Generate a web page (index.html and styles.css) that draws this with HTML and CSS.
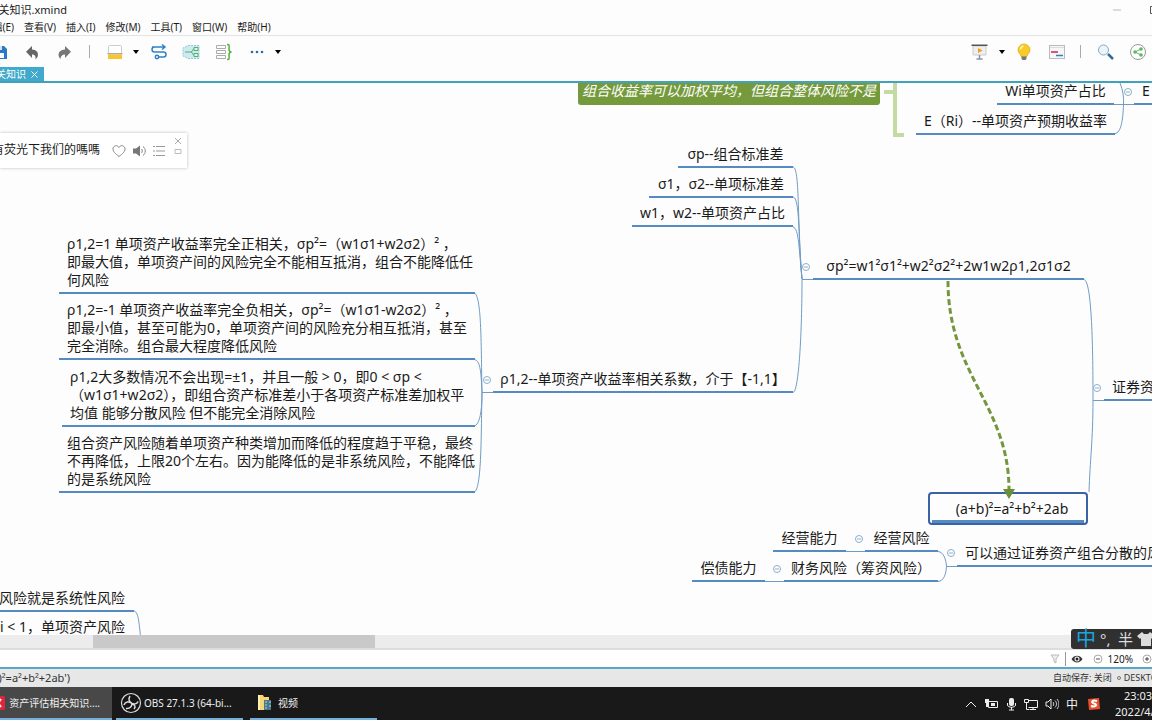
FILE: index.html
```html
<!DOCTYPE html>
<html lang="zh-CN">

<head>
  <meta charset="UTF-8">
  <meta name="viewport" content="width=device-width, initial-scale=1.0">
  <title>资产评估相关知识.xmind</title>
  <link rel="stylesheet" href="styles.css">
</head>

<body>
  <div class="window">
    <header class="title-bar">
      <span class="file-name">资产评估相关知识.xmind</span>
      <div class="window-buttons">
        <button aria-label="最小化"><svg width="10" height="10"><path d="M1 5h8" stroke="#bbb" /></svg></button>
        <button aria-label="最大化"><svg width="10" height="10"><path d="M.5 1.500h8v7h-8z" fill="none" stroke="#555" /></svg></button>
      </div>
    </header>

    <nav class="menu-bar">
      <div class="menu-first"><button>编辑(E)</button></div>
      <button>查看(V)</button>
      <button>插入(I)</button>
      <button>修改(M)</button>
      <button>工具(T)</button>
      <button>窗口(W)</button>
      <button>帮助(H)</button>
    </nav>

    <div class="toolbar">
      <div class="tools tools-left">
        <button aria-label="保存"><svg viewBox="0 0 20 20"><path d="M4 4h10l3 3v10H4z" fill="#2b78c5" /><path d="M6 11h8v5H6z" fill="#fff" /><path d="M7 4h5v4H7z" fill="#cfe3f5" /></svg></button>
        <button aria-label="撤销"><svg viewBox="0 0 20 20"><path d="M10 4v3.500c5 .2 7 3.500 5.500 7.500l-2 2.500c.4-3.500-.5-5-3.500-5V16L4 9.800z" fill="#666" /></svg></button>
        <button aria-label="重做"><svg viewBox="0 0 20 20"><path d="M11 4v3.500c-5 .2-7.500 3.500-6 7.500l1.500 2c.3-3 1.500-4.500 4.500-4.500V16l6-6.200z" fill="#777" /></svg></button>
        <span class="divider"></span>
        <button aria-label="样式"><svg viewBox="0 0 20 20"><rect x="3.500" y="3.500" width="13" height="8" rx="1" fill="#fff" stroke="#ccc" /><path d="M2.500 11h15v1.500h-15z" fill="#aaa" /><path d="M3 12.500h14V17H3z" fill="#f7c52d" /></svg></button>
        <button class="caret" aria-label="更多样式"><svg viewBox="0 0 6 4"><path d="M0 0h6L3 4z" /></svg></button>
        <button aria-label="联系"><svg viewBox="0 0 20 20" fill="none" stroke="#2f82c8" stroke-width="1.500"><path d="M3 5h13M13 2.500L16 5l-3 2.500M7 5H5.500a2.500 2.500 0 0 0 0 5h9a2.500 2.500 0 0 1 0 5H10" /><circle cx="8" cy="15" r="1.700" /></svg></button>
        <button aria-label="外框"><svg viewBox="0 0 20 20"><path d="M7 3.500h11v13H7L2 14V6z" fill="#cdeaf0" stroke="#9ac7d5" stroke-dasharray="2 1" /><path d="M4 10h6M10 10c2 0 1-3 3-3M10 10c2 0 1 3 3 3" fill="none" stroke="#4caf6d" /><path d="M13 5.500h4v3h-4zM13 11.500h4v3h-4z" fill="#dff5e8" stroke="#52ad7b" /></svg></button>
        <button aria-label="概要"><svg viewBox="0 0 20 20" fill="none"><path d="M3.500 3.500h9v3h-9zM3.500 8.500h9v3h-9zM3.500 13.500h9v3h-9z" stroke="#aaa" /><path d="M14 2.500c3 0 2 1.500 2 4.500 0 2 .5 3 2.500 3-2 0-2.500 1-2.500 3 0 3 1 4.500-2 4.500" stroke="#54ae3b" stroke-width="1.500" /></svg></button>
        <button aria-label="更多"><svg viewBox="0 0 20 20" fill="#2b6cb0"><circle cx="7" cy="10" r="1.300" /><circle cx="12" cy="10" r="1.300" /><circle cx="17" cy="10" r="1.300" /></svg></button>
        <button class="caret caret-last" aria-label="展开"><svg viewBox="0 0 6 4"><path d="M0 0h6L3 4z" /></svg></button>
      </div>
      <div class="tools">
        <button aria-label="演示"><svg viewBox="0 0 20 20"><path d="M4 4h13v9H4z" fill="#eee" stroke="#ccc" /><path d="M2.500 2.500h16V4h-16z" fill="#555" /><path d="M9 6l4.500 2.500L9 11z" fill="#f0a020" /><path d="M10.500 13v4M7.500 17h6" stroke="#8892a8" stroke-width="1.500" /></svg></button>
        <button class="caret caret-last" aria-label="演示选项"><svg viewBox="0 0 6 4"><path d="M0 0h6L3 4z" /></svg></button>
        <button aria-label="头脑风暴"><svg viewBox="0 0 20 20"><path d="M11 2a6 6 0 0 1 6 6c0 3-3 4-3 6.500H8C8 12 5 11 5 8a6 6 0 0 1 6-6z" fill="#f9cb28" stroke="#e0a91c" stroke-width=".8" /><path d="M8.500 14.500h5v2l-1 1.500h-3l-1-1.500z" fill="#777" /><path d="M7.500 7.500c0-2 1-3 3-3.500" stroke="#fff1b0" fill="none" stroke-width="1.500" /></svg></button>
        <button aria-label="甘特图"><svg viewBox="0 0 20 20"><rect x="4.500" y="3.500" width="15" height="13" fill="#f6f6f6" stroke="#bbb" /><path d="M5 5.500h14" stroke="#ddd" /><path d="M6 10h7" stroke="#d0214c" stroke-width="1.500" /><path d="M11 13.500h7" stroke="#2f7ec6" stroke-width="1.500" /></svg></button>
        <span class="divider"></span>
        <button aria-label="搜索"><svg viewBox="0 0 20 20"><circle cx="7.500" cy="8" r="5" fill="#eaf6fc" stroke="#86a8bd" /><path d="M12 12l5 5" stroke="#326d99" stroke-width="2.500" /></svg></button>
        <button aria-label="分享"><svg viewBox="0 0 20 20"><circle cx="10" cy="10" r="7.500" fill="#fff" stroke="#999" /><path d="M13 7l-6 3 6 3" fill="none" stroke="#5cb860" /><circle cx="13" cy="7" r="1.800" fill="#5cb860" /><circle cx="7" cy="10" r="1.800" fill="#5cb860" /><circle cx="13" cy="13" r="1.800" fill="#5cb860" /></svg></button>
      </div>
    </div>

    <div class="tab-bar">
      <div class="tab">
        <span>资产评估相关知识</span>
        <button aria-label="关闭标签"><svg width="7" height="7"><path d="M.5.500l6 6M6.500.500l-6 6" stroke="#fff" /></svg></button>
      </div>
    </div>

    <main class="canvas">
      <!-- connectors, fold toggles -->
      <svg class="lines" width="1152" height="552" viewBox="0 83 1152 552">
        <g class="branch">
          <path d="M793 167C800 168 797 220 802 279" />
          <path d="M793 197C800 198 798 235 802 279" />
          <path d="M793 227C799 228 799 250 802 279" />
          <path d="M813 279.500H802C802 330 799 392 793 392.500" />
          <path d="M474 293C482 294 481 350 482 392.500" />
          <path d="M474 359.500C481 360 481 375 482 392.500" />
          <path d="M474 426C480 425 482 410 482 392.500" />
          <path d="M474 492C482 491 481 430 482 392.500H494" />
          <path d="M1084 279.500C1092 281 1093 350 1093 400C1093 440 1090 460 1089 492" />
          <path d="M1093 400.500H1104" />
          <path d="M1120 83C1123 90 1124 98 1123.500 104.500C1123 120 1121 133 1115 133.500" />
          <path d="M1114 104.500H1134" />
          <path d="M846 551.500H865M764 581.500H784" />
          <path d="M938 551.500C944 552 946 560 946.500 566.500C946 574 944 581 938 581.500M946.500 566.500H957" />
          <path d="M134 611C139 612 139 625 141 640" />
        </g>
        <path class="bracket" d="M884 92h9M895 83v52h9" />
        <path class="relation" d="M948 281C948 375 1009 405 1009 490" />
        <g class="toggle">
          <circle cx="806" cy="267" r="3.500" /><path d="M804 267h4" />
          <circle cx="487" cy="380" r="3.500" /><path d="M485 380h4" />
          <circle cx="1097" cy="388" r="3.500" /><path d="M1095 388h4" />
          <circle cx="1128" cy="92" r="3.500" /><path d="M1126 92h4" />
          <circle cx="859" cy="539" r="3.500" /><path d="M857 539h4" />
          <circle cx="777" cy="569" r="3.500" /><path d="M775 569h4" />
          <circle cx="951" cy="553" r="3.500" /><path d="M949 553h4" />
        </g>
      </svg>

      <div class="callout">组合收益率可以加权平均，但组合整体风险不是</div>
      <div class="node n-wi">Wi单项资产占比</div>
      <div class="node n-e">E（R）</div>
      <div class="node n-eri">E（Ri）--单项资产预期收益率</div>

      <div class="node n-sigma-p">σp--组合标准差</div>
      <div class="node n-sigma">σ1，σ2--单项标准差</div>
      <div class="node n-w">w1，w2--单项资产占比</div>
      <div class="node n-formula">σp²=w1²σ1²+w2²σ2²+2w1w2ρ1,2σ1σ2</div>
      <div class="node n-rho">ρ1,2--单项资产收益率相关系数，介于【-1,1】</div>

      <div class="node note n-note1">ρ1,2=1 单项资产收益率完全正相关，σp²=（w1σ1+w2σ2）² ，<br>即最大值，单项资产间的风险完全不能相互抵消，组合不能降低任<br>何风险</div>
      <div class="node note n-note2">ρ1,2=-1 单项资产收益率完全负相关，σp²=（w1σ1-w2σ2）² ，<br>即最小值，甚至可能为0，单项资产间的风险充分相互抵消，甚至<br>完全消除。组合最大程度降低风险</div>
      <div class="node note n-note3">ρ1,2大多数情况不会出现=±1，并且一般 &gt; 0，即0 &lt; σp &lt;<br>（w1σ1+w2σ2），即组合资产标准差小于各项资产标准差加权平<br>均值 能够分散风险 但不能完全消除风险</div>
      <div class="node note n-note4">组合资产风险随着单项资产种类增加而降低的程度趋于平稳，最终<br>不再降低，上限20个左右。因为能降低的是非系统风险，不能降低<br>的是系统风险</div>

      <div class="node n-portfolio">证券资产组合的风险</div>
      <div class="selection"><div class="node">(a+b)²=a²+b²+2ab</div></div>
      <div class="node n-op-power">经营能力</div>
      <div class="node n-op-risk">经营风险</div>
      <div class="node n-debt">偿债能力</div>
      <div class="node n-fin">财务风险（筹资风险）</div>
      <div class="node n-spread">可以通过证券资产组合分散的风险</div>
      <div class="node n-market">市场组合风险就是系统性风险</div>
      <div class="node n-beta">Bi &lt; 1，单项资产风险</div>

      <svg class="arrow" width="12" height="10"><path d="M0 0h12L6 10z" fill="#6a8f35" /></svg>

      <div class="lyrics">
        <span class="lyrics-text">只有荧光下我们的嗎嗎</span>
        <button aria-label="喜欢"><svg width="14" height="14" viewBox="0 0 14 14"><path d="M7 12.500C3 9.500 1 7.500 1 5c0-3.500 4.500-4.500 6-1.500C8.500.5 13 1.500 13 5c0 2.500-2 4.500-6 7.500z" fill="none" stroke="#888" /></svg></button>
        <button aria-label="音量"><svg width="14" height="14" viewBox="0 0 14 14"><path d="M1 4.500h3l4-3v11l-4-3H1z" fill="#777" /><path d="M9.500 5c1 1 1 3 0 4M11 2.500c3 2 3 7 0 9" fill="none" stroke="#888" /></svg></button>
        <button aria-label="列表"><svg width="14" height="14" viewBox="0 0 14 14"><path d="M1 2.500h2M1 7h2M1 11.500h2M4 2.500h9M4 7h9M4 11.500h9" stroke="#999" /></svg></button>
        <div class="lyrics-side">
          <button aria-label="关闭"><svg width="8" height="8"><path d="M1 1l6 6M7 1L1 7" stroke="#aaa" /></svg></button>
          <button aria-label="窗口"><svg width="8" height="8"><path d="M1 1.500h6v4H1z" fill="none" stroke="#bbb" /></svg></button>
        </div>
      </div>
    </main>

    <div class="scrollbar"><div class="scroll-thumb"></div></div>

    <div class="zoom-bar">
      <button aria-label="筛选"><svg width="10" height="10"><path d="M1 1h8L6 5v4L4 8V5z" fill="#eee" stroke="#bbb" /></svg></button>
      <span class="zoom-divider"></span>
      <button aria-label="预览"><svg width="12" height="10"><path d="M.5 5C3 .5 9 .5 11.500 5 9 9.500 3 9.500.5 5z" fill="#333" /><circle cx="6" cy="5" r="2.500" fill="#fff" /><circle cx="6" cy="5" r="1.500" fill="#222" /></svg></button>
      <button class="zoom-out" aria-label="缩小"><svg width="10" height="10"><circle cx="5" cy="5" r="4" fill="#fff" stroke="#aaa" /><path d="M3 5h4" stroke="#555" /></svg></button>
      <span class="zoom-value">120%</span>
      <button aria-label="放大"><svg width="10" height="10"><circle cx="5" cy="5" r="4" fill="#fff" stroke="#aaa" /><path d="M3 5h4M5 3v4" stroke="#444" /></svg></button>
    </div>

    <footer class="status-bar">
      <span class="status-text">主题 ('(a+b)²=a²+b²+2ab')</span>
      <span class="status-right"><span>自动保存: 关闭</span><i></i><span class="host">DESKTOP</span></span>
    </footer>

    <div class="taskbar">
      <button class="task task-xmind"><svg width="14" height="14"><rect width="14" height="14" rx="2" fill="#e0263c" /><path d="M4 3l6 8M10 3L7 7l-4 3" stroke="#fff" stroke-width="2" /></svg><span>资产评估相关知识....</span></button>
      <button class="task task-open"><svg width="22" height="22" viewBox="0 0 22 22"><circle cx="11" cy="11" r="9.500" fill="#151515" stroke="#ddd" stroke-width="1.200" /><path d="M10 4c-2 3-1 6 2 7.500 3 1 5.500 0 6-2M12 11.500c0 3-2 5.500-6 5M12 11.500C9 9 5 9.500 4 13M14 17c2-2 1-4-2-5.500" fill="none" stroke="#ddd" stroke-width="1.500" /></svg><span>OBS 27.1.3 (64-bi...</span></button>
      <button class="task task-open task-folder"><svg width="14" height="17"><path d="M0 1h5l1 2h5v13H0z" fill="#f6d675" /><path d="M0 1h2v15H0z" fill="#fff0b8" /><path d="M6 6h7v10H6z" fill="#49788d" /><path d="M7 8h2M7 11h2M7 14h2M11 8h2M11 12h2" stroke="#b7d4cf" /></svg><span>视频</span></button>
      <div class="tray">
        <svg width="12" height="14"><path d="M1 10l5-5 5 5" fill="none" stroke="#eee" /></svg>
        <svg width="14" height="14"><path d="M4.500 4.500h9v6h-9z" fill="none" stroke="#eee" /><path d="M7 6h4v3H7zM1 2h4v4H4v4H2V6H1z" fill="#eee" /></svg>
        <svg width="12" height="14"><rect x="4" y="1" width="5" height="8" rx="2" fill="#eee" /><path d="M2.500 6v2c0 3 8 3 8 0V6M6.500 10v3M4 13h5" fill="none" stroke="#eee" /></svg>
        <svg width="14" height="14"><path d="M4.500 3.500h9v7h-9M9 10.500v2M6 12.500h6M.5 2.500h4v3h-4zM2.500 5.500v7h3" fill="none" stroke="#eee" /></svg>
        <svg width="14" height="14"><path d="M1 5h2l3-3v10L3 9H1z" fill="none" stroke="#eee" /><path d="M8 5c1 1 1 3 0 4M10 3.500c2 2 2 5 0 7M12 2c2.500 3 2.500 7 0 10" fill="none" stroke="#ccc" /></svg>
        <span class="tray-ime">中</span>
        <svg class="sogou" width="14" height="14"><path d="M1 2l11-1 1 11-11 1z" fill="#e8512f" /><path d="M10 4C5 2.500 3.500 5.500 7 6.500c4 1 2 4-3 2.500" fill="none" stroke="#fff" stroke-width="2" /></svg>
        <div class="clock"><span>23:03</span><span>2022/4/6</span></div>
      </div>
    </div>

    <div class="ime-bar">
      <span class="ime-lang">中</span>
      <span class="ime-punct">°,</span>
      <span>半</span>
      <svg width="18" height="16"><path d="M5 1l2 2h4l2-2 5 4-3 3-1-1v8H4V7L3 8 0 5z" fill="#ddd" /></svg>
    </div>
  </div>
</body>

</html>
```
FILE: styles.css
```css
* {
  box-sizing: border-box;
}

body {
  margin: 0;
  font-family: "Noto Sans", "Noto Sans CJK SC", sans-serif;
  color: #1a1a1a;
}

button {
  padding: 0;
  border: none;
  background: none;
  font: inherit;
  color: inherit;
  white-space: nowrap;
}

svg {
  display: block;
  flex: none;
}

.window {
  position: relative;
  display: flex;
  flex-direction: column;
  height: 100vh;
  overflow: hidden;
  background: #fdfdfd;
  white-space: nowrap;
}

/* title and menu */
.title-bar {
  display: flex;
  justify-content: space-between;
  height: 19px;
  font-size: 11px;
  line-height: 19px;
  overflow: hidden;
}

.file-name {
  display: flex;
  justify-content: flex-end;
  width: 67px;
}

.window-buttons {
  display: flex;
  gap: 28px;
  align-items: center;
  margin-right: -8px;
}

.menu-bar {
  display: flex;
  gap: 10px;
  height: 17px;
  font-size: 10px;
  line-height: 17px;
  border-bottom: 1px solid #e3e3e3;
}

.menu-first {
  display: flex;
  justify-content: flex-end;
  width: 14px;
}

/* toolbar */
.toolbar {
  display: flex;
  justify-content: space-between;
  height: 31px;
  padding-right: 4px;
}

.tools {
  display: flex;
  align-items: center;
  gap: 12px;
}

.tools-left {
  margin-left: -10px;
}

.tools button {
  width: 20px;
}

.tools .caret {
  width: 6px;
  margin: 0 -2px 0 -4px;
}

.tools .caret-last {
  margin: 0 -4px 0 -2px;
}

.divider {
  width: 1px;
  height: 13px;
  margin: 0 3px;
  background: #aaa;
}

.tab-bar {
  display: flex;
  height: 16px;
  border-bottom: 2px solid #3fa3bd;
}

.tab {
  display: flex;
  justify-content: flex-end;
  align-items: center;
  gap: 5px;
  width: 44px;
  padding-right: 6px;
  background: #41a9cc;
  color: #fff;
  font-size: 10px;
  line-height: 14px;
}

/* mind map */
.canvas {
  position: relative;
  flex: 1;
  overflow: hidden;
}

.lines {
  position: absolute;
  left: 0;
  top: 0;
}

.branch {
  fill: none;
  stroke: #6f9cc6;
}

.bracket {
  fill: none;
  stroke: #c3daa3;
  stroke-width: 4px;
}

.relation {
  fill: none;
  stroke: #76963d;
  stroke-width: 3px;
  stroke-dasharray: 6 3;
}

.toggle {
  fill: #fff;
  stroke: #8badca;
}

.node {
  position: absolute;
  padding-bottom: 3px;
  border-bottom: 2px solid #568bc2;
  font-size: 14px;
  line-height: 18px;
  text-align: center;
}

.note {
  width: 416px;
  padding-left: 8px;
  text-align: left;
}

.callout {
  position: absolute;
  left: 578px;
  top: -6px;
  width: 302px;
  padding: 4px 0;
  border-radius: 3px;
  background: #759a3b;
  color: #fff;
  font-size: 14px;
  font-style: italic;
  line-height: 20px;
  text-align: center;
}

.n-wi { left: 997px; top: -1px; width: 117px; }
.n-e { left: 1134px; top: -1px; padding-left: 8px; }
.n-eri { left: 916px; top: 29px; width: 199px; }
.n-sigma-p { left: 678px; top: 62px; width: 115px; }
.n-sigma { left: 649px; top: 92px; width: 144px; }
.n-w { left: 632px; top: 121px; width: 161px; }
.n-formula { left: 813px; top: 174px; width: 271px; }
.n-rho { left: 493px; top: 287px; width: 300px; }
.n-note1 { left: 59px; top: 152px; }
.n-note2 { left: 59px; top: 218px; }
.n-note3 { left: 62px; top: 285px; width: 413px; }
.n-note4 { left: 59px; top: 351px; }
.n-portfolio { left: 1104px; top: 295px; padding-left: 8px; }
.n-op-power { left: 773px; top: 446px; width: 73px; }
.n-op-risk { left: 865px; top: 446px; width: 73px; }
.n-debt { left: 692px; top: 476px; width: 73px; }
.n-fin { left: 784px; top: 476px; width: 154px; }
.n-spread { left: 957px; top: 461px; padding-left: 8px; }
.n-market { right: calc(100% - 134px); top: 506px; padding-right: 9px; }
.n-beta { right: calc(100% - 134px); top: 535px; padding-right: 9px; }

.selection {
  position: absolute;
  left: 928px;
  top: 409px;
  width: 160px;
  padding: 6px 2px 0;
  border: 2px solid #3a62a5;
  border-radius: 4px;
}

.selection .node {
  position: static;
  padding: 0 0 2px 8px;
  border-bottom-width: 3px;
}

.arrow {
  position: absolute;
  left: 1003px;
  top: 406px;
}

.lyrics {
  position: absolute;
  left: 0;
  top: 50px;
  display: flex;
  align-items: center;
  gap: 6px;
  width: 187px;
  height: 35px;
  background: #fff;
  box-shadow: 0 0 3px #bbb;
  font-family: "Noto Sans CJK SC", sans-serif;
  font-size: 12px;
}

.lyrics-text {
  display: flex;
  justify-content: flex-end;
  width: 100px;
  margin-right: 6px;
  padding-bottom: 4px;
}

.lyrics-side {
  display: flex;
  flex-direction: column;
  gap: 3px;
  margin: 0 0 8px 2px;
}

/* scrollbar and zoom */
.scrollbar {
  height: 15px;
  padding-left: 93px;
  background: #ececec;
  border-bottom: 2px solid #ddd;
}

.scroll-thumb {
  width: 282px;
  height: 13px;
  background: #c9c9c9;
}

.zoom-bar {
  display: flex;
  justify-content: flex-end;
  align-items: center;
  gap: 5px;
  height: 17px;
  background: #fff;
  font-size: 10px;
}

.zoom-divider {
  width: 1px;
  height: 14px;
  background: #999;
}

.zoom-out {
  margin-left: 5px;
}

.zoom-value {
  margin-right: 4px;
}

.status-bar {
  display: flex;
  justify-content: space-between;
  height: 20px;
  border-top: 2px solid #57a9cc;
  background: #e7e7e7;
  color: #333;
  font-size: 11px;
  line-height: 18px;
}

.status-text {
  display: flex;
  justify-content: flex-end;
  width: 70px;
}

.status-right {
  display: flex;
  align-items: center;
  gap: 5px;
  width: 99px;
  font-size: 9px;
}

.status-right i {
  flex: none;
  width: 4px;
  height: 4px;
  border: 1px solid #777;
  border-radius: 50%;
}

.host {
  margin-left: -2px;
}

/* taskbar */
.taskbar {
  display: flex;
  height: 33px;
  background: #191919;
  color: #f0f0f0;
  font-size: 10px;
}

.task {
  display: flex;
  align-items: center;
  gap: 4px;
  height: 33px;
  border-bottom: 2px solid #76b1dc;
}

.task-xmind {
  justify-content: flex-end;
  width: 112px;
  padding-right: 12px;
  background: #484848;
}

.task-open {
  width: 127px;
  margin-left: 4px;
  padding-left: 4px;
  gap: 2px;
}

.task-folder {
  margin-left: 7px;
  padding-left: 8px;
  gap: 6px;
}

.tray {
  display: flex;
  align-items: center;
  gap: 7px;
  margin-left: auto;
  width: 187px;
}

.tray-ime {
  font-size: 12px;
}

.sogou {
  margin-left: 2px;
}

.clock {
  display: flex;
  flex-direction: column;
  align-items: center;
  margin-left: 7px;
  font-size: 11px;
  line-height: 16px;
}

.ime-bar {
  position: absolute;
  right: -8px;
  bottom: 71px;
  display: flex;
  align-items: center;
  gap: 4px;
  width: 89px;
  height: 20px;
  padding-left: 5px;
  border-radius: 3px;
  background: #303030;
  color: #ddd;
  font-size: 15px;
  line-height: 20px;
}

.ime-lang {
  color: #1ba4e0;
  font-size: 20px;
}

.ime-punct {
  width: 14px;
}
```
